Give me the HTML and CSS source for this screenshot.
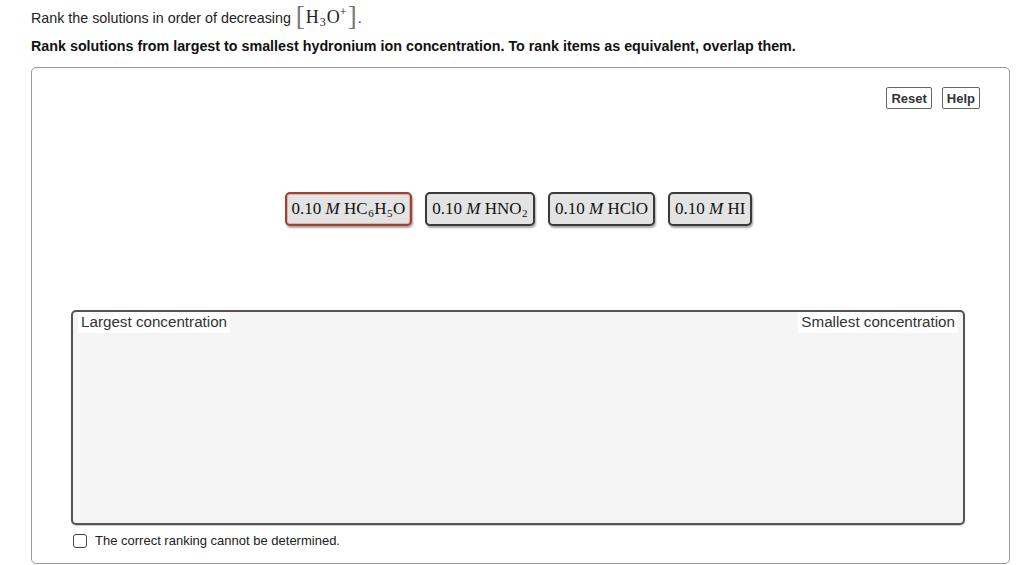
FILE: index.html
```html
<!DOCTYPE html>
<html>
<head>
<meta charset="utf-8">
<link rel="stylesheet" href="styles.css">
</head>
<body>
<div class="header">
  <p class="q">Rank the solutions in order of decreasing <span class="math"><span class="br">[</span>H<sub>3</sub>O<sup>+</sup><span class="br">]</span></span>.</p>
  <p class="instr">Rank solutions from largest to smallest hydronium ion concentration. To rank items as equivalent, overlap them.</p>
</div>
<div class="panel">
  <div class="toolbar">
    <button class="btn">Reset</button>
    <button class="btn">Help</button>
  </div>
  <div class="tiles">
    <div class="tile selected">0.10 <i>M</i> HC<sub>6</sub>H<sub>5</sub>O</div>
    <div class="tile">0.10 <i>M</i> HNO<sub>2</sub></div>
    <div class="tile">0.10 <i>M</i> HClO</div>
    <div class="tile">0.10 <i>M</i> HI</div>
  </div>
  <div class="rankbox">
    <span class="lbl">Largest concentration</span>
    <span class="lbl">Smallest concentration</span>
  </div>
  <label class="check"><span class="box"></span>The correct ranking cannot be determined.</label>
</div>
</body>
</html>
```
FILE: styles.css
```css
html, body { margin: 0; padding: 0; background: #fff; }
body { font-family: "Liberation Sans", Arial, sans-serif; color: #222; width: 1024px; height: 565px; overflow: hidden; }
.header { padding: 6px 0 0 31px; }
.q { margin: 0; font-size: 14.3px; height: 23px; line-height: 23px; }
.math { font-family: "Liberation Serif", "Times New Roman", serif; font-size: 18px; color: #222; }
.math sub { font-size: 12px; vertical-align: -3px; line-height: 0; margin: 0 1px; }
.math sup { font-size: 12px; vertical-align: 7px; line-height: 0; }
.br { font-size: 27px; font-weight: 300; color: #777; vertical-align: -2px; line-height: 0; margin: 0 1px; }
.instr { margin: 9px 0 0 0; font-size: 14.3px; font-weight: bold; line-height: 17px; color: #111; }
.panel { margin: 12px 0 0 31px; width: 977px; height: 495px; border: 1px solid #9a9a9a; border-radius: 5px; box-sizing: content-box; display: flex; flex-direction: column; }
.toolbar { display: flex; justify-content: flex-end; gap: 10px; padding: 19px 29px 0 0; }
.btn { font-family: "Liberation Sans", Arial, sans-serif; font-weight: bold; font-size: 13px; color: #333; background: #fff; border: 1px solid #666; border-radius: 2px; height: 22px; padding: 0 4px; line-height: 19px; }
.tiles { display: flex; justify-content: center; gap: 13px; margin-top: 83px; padding-right: 4px; }
.tile { font-family: "Liberation Serif", "Times New Roman", serif; font-size: 17px; color: #111; background: #e3e3e3; border: 2px solid #3a3a3a; border-radius: 5px; line-height: 29px; padding: 0 5px; box-shadow: 1px 2px 2px rgba(0,0,0,0.35); box-sizing: border-box; height: 34px; }
.tile sub { font-size: 11px; vertical-align: -3px; line-height: 0; margin: 0 0.5px; }
.tile.selected { border-color: #a5402e; box-shadow: 1px 2px 2px rgba(0,0,0,0.35), inset 0 0 0 1px #c9b9b5; }
.rankbox { margin: 84px 0 0 39px; width: 894px; height: 215px; box-sizing: border-box; border: 2px solid #5a5252; border-radius: 5px; background: #f5f5f5; display: flex; justify-content: space-between; align-items: flex-start; padding: 0 5px; box-shadow: 0 1px 1px rgba(0,0,0,0.2); }
.lbl { background: #fff; font-size: 15.2px; color: #333; padding: 1px 3px 2px 3px; line-height: 18px; }
.check { display: flex; align-items: center; margin: 8px 0 0 41px; font-size: 13px; color: #222; }
.box { width: 14px; height: 14px; border: 1px solid #444; border-radius: 3px; margin-right: 8px; background: #fff; box-sizing: border-box; }
```
